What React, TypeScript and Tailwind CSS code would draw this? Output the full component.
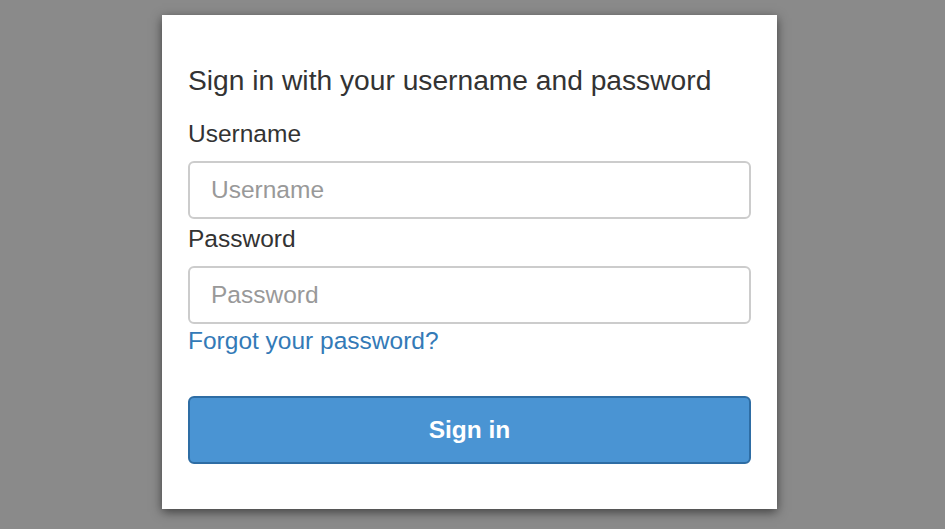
export default function App() {
  return (
    <div className="min-h-[529px] w-full bg-[#8a8a8a] pt-[15px] pl-[162px] font-['Liberation_Sans',Arial,sans-serif]">
      <div className="w-[615px] bg-white px-[26px] pt-[48px] pb-[45px] shadow-[0_3px_10px_rgba(0,0,0,0.55)]">
        <h1 className="text-[28.2px] leading-[34px] text-[#333]">Sign in with your username and password</h1>

        <form className="flex flex-col">
          <label htmlFor="username" className="mt-[20px] mb-[10px] text-[24.5px] leading-[34px] text-[#333]">
            Username
          </label>
          <input
            id="username"
            type="text"
            placeholder="Username"
            className="h-[58px] w-full rounded-[6px] border-2 border-[#ccc] bg-white px-[21px] text-[24.5px] text-[#555] placeholder:text-[#999] outline-none"
          />

          <label htmlFor="password" className="mt-[3px] mb-[10px] text-[24.5px] leading-[34px] text-[#333]">
            Password
          </label>
          <input
            id="password"
            type="password"
            placeholder="Password"
            className="h-[58px] w-full rounded-[6px] border-2 border-[#ccc] bg-white px-[21px] text-[24.5px] text-[#555] placeholder:text-[#999] outline-none"
          />

          <a href="#" className="self-start text-[24.5px] leading-[34px] text-[#337ab7]">
            Forgot your password?
          </a>

          <button
            type="button"
            className="mt-[38px] h-[68px] w-full rounded-[6px] border-2 border-[#2e6da4] bg-[#4a94d3] text-[24.5px] font-bold text-white"
          >
            Sign in
          </button>
        </form>
      </div>
    </div>
  );
}
